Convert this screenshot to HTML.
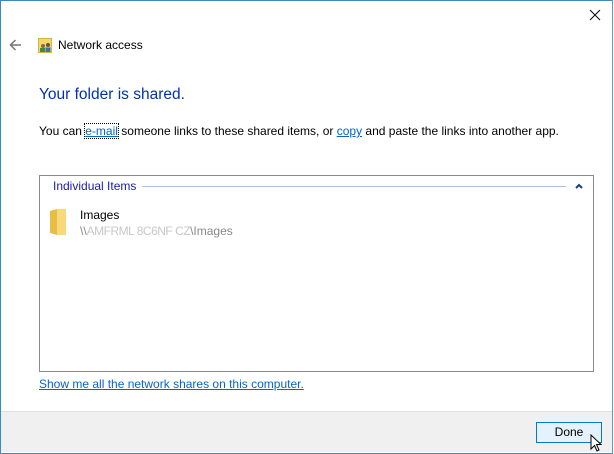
<!DOCTYPE html>
<html><head><style>
*{margin:0;padding:0;box-sizing:border-box}
body{width:614px;height:454px;overflow:hidden;background:#fff;font-family:"Liberation Sans",sans-serif;font-size:12px;color:#000;position:relative}
.win{position:absolute;left:0;top:0;width:613px;height:454px;border:1px solid #3c8ac4;border-right:1px solid #5a9bd0}
.abs{position:absolute;white-space:nowrap}
a{color:#0066cc;text-decoration:underline}
.footer{position:absolute;left:1px;top:411px;width:611px;height:41px;background:#f0f0f0;border-top:1px solid #dfdfdf}
</style></head><body>
<div class="win"></div>
<svg class="abs" style="left:589px;top:9px" width="12" height="12"><path d="M1 1L11 11M11 1L1 11" stroke="#111" stroke-width="1.1"/></svg>
<svg class="abs" style="left:9px;top:39px" width="13" height="12"><path d="M12 6H1.5M6.5 1L1.5 6L6.5 11" stroke="#777" stroke-width="1.5" fill="none"/></svg>
<svg class="abs" style="left:38px;top:38px" width="14" height="15"><rect x="0.5" y="0.5" width="13" height="14" fill="#f4d66a" stroke="#d8b440"/><circle cx="5" cy="8" r="2" fill="#8a6a40"/><rect x="2" y="10" width="5" height="4" fill="#3a8a4a"/><circle cx="10" cy="7" r="2" fill="#6a5040"/><rect x="7.5" y="9.5" width="5" height="4.5" fill="#3a70b0"/></svg>
<div class="abs" style="left:58px;top:38px;font-size:12px">Network access</div>
<div class="abs" style="left:39px;top:86px;font-size:15.5px;color:#0033aa">Your folder is shared.</div>
<div class="abs" style="left:39px;top:124px">You can <a style="outline:1px dotted #000">e-mail</a> someone links to these shared items, or <a>copy</a> and paste the links into another app.</div>
<div class="abs" style="left:39px;top:175px;width:555px;height:197px;border:1px solid #8a8a8a"></div>
<div class="abs" style="left:53px;top:179px;color:#1a1aa8">Individual Items</div>
<div class="abs" style="left:142px;top:186px;width:424px;height:1px;background:#a8bfe0"></div>
<svg class="abs" style="left:575px;top:183px" width="8" height="6"><path d="M1 5L4 2L7 5" stroke="#1a3a8a" stroke-width="2" fill="none"/></svg>
<svg class="abs" style="left:49px;top:208px" width="20" height="28"><path d="M1 3L8 1V27L1 25Z" fill="#e6bd45"/><path d="M8 1H17V27H8Z" fill="#f7d97c"/></svg>
<div class="abs" style="left:80px;top:208px">Images</div>
<div class="abs" style="left:80px;top:224px;color:#888">\\<span style="color:#c8c8c8;letter-spacing:-0.5px">AMFRML  8C6NF CZ</span>\Images</div>
<div class="abs" style="left:39px;top:377px"><a>Show me all the network shares on this computer.</a></div>
<div class="footer"></div>
<div class="abs" style="left:536px;top:422px;width:66px;height:21px;border:1px solid #0078d7;background:#e5f1fb;text-align:center;line-height:19px">Done</div>
<svg class="abs" style="left:590px;top:434px" width="12" height="19"><path d="M1 1V15L4.5 11.5L7 17L9 16L6.5 10.5H11Z" fill="#fff" stroke="#000" stroke-width="1"/></svg>
</body></html>
